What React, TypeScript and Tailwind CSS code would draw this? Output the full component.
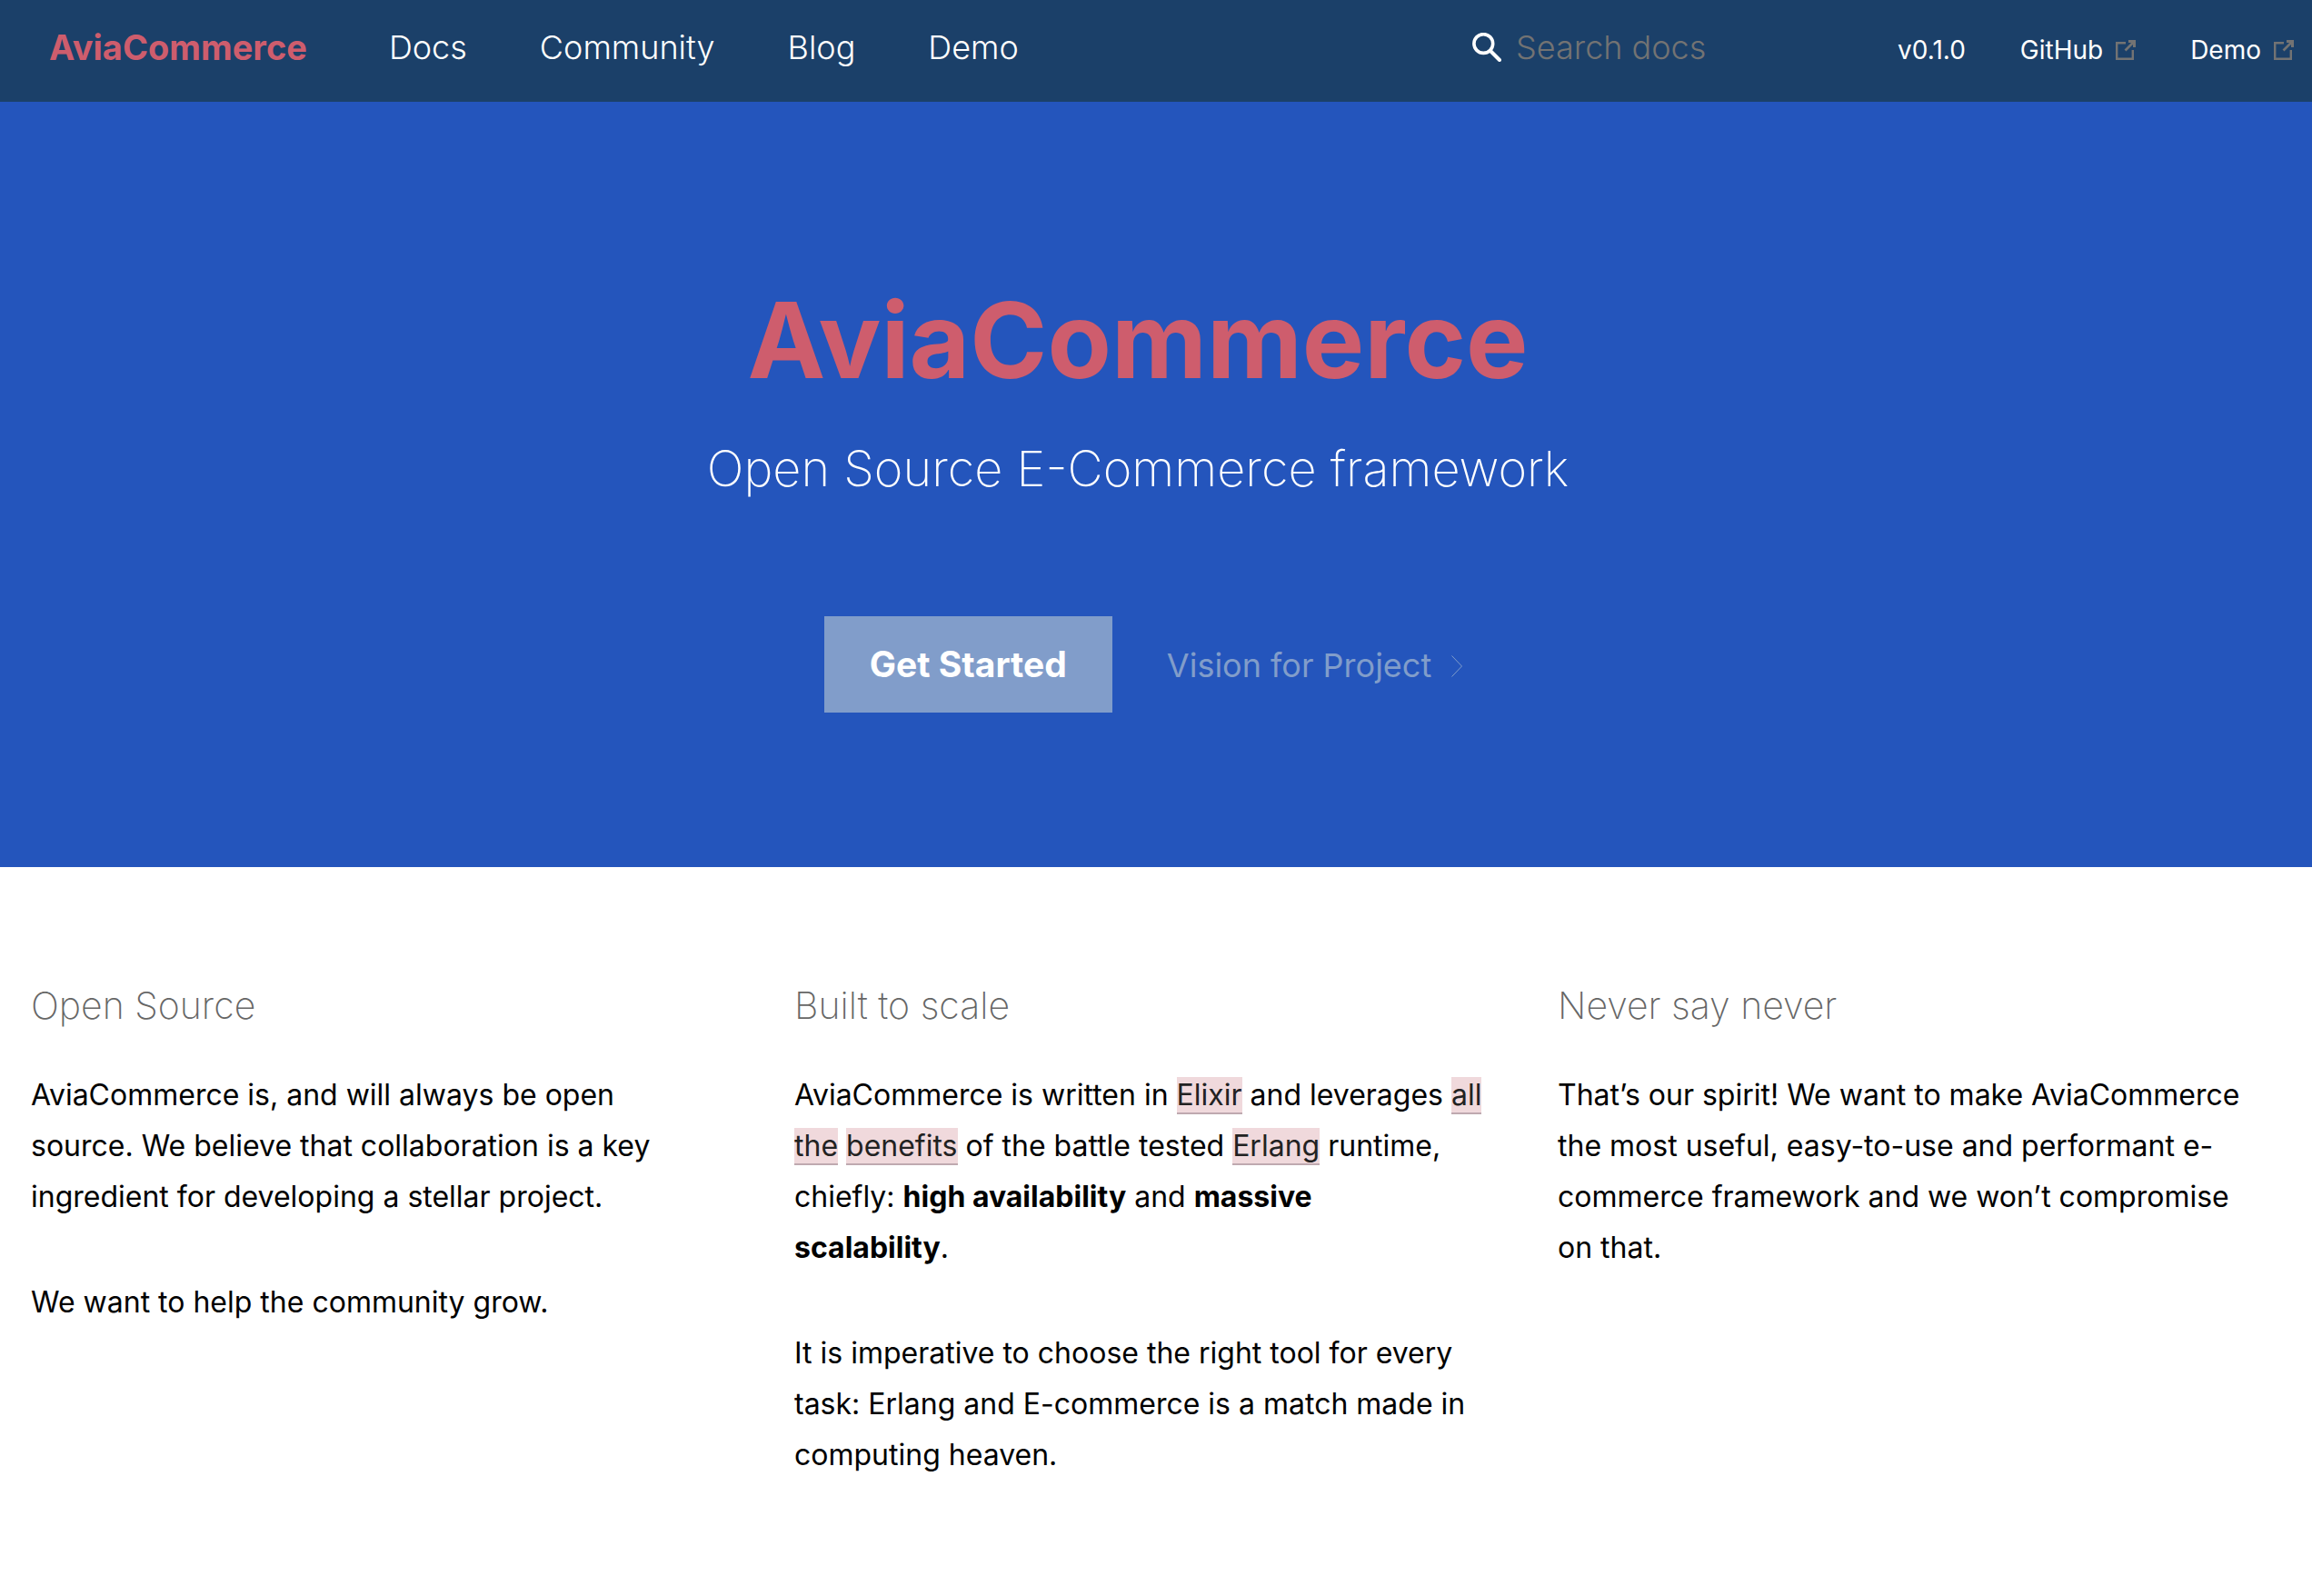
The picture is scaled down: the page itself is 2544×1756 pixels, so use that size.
import { ReactNode } from "react";

interface NavLinkProps {
  href: string;
  children: ReactNode;
}

const mainLinks = ["Docs", "Community", "Blog", "Demo"];

const SearchIcon = () => (
  <svg className="size-8 shrink-0" viewBox="0 0 32 32" fill="none" stroke="#fff" aria-hidden="true">
    <circle cx="12.3" cy="12" r="10.4" strokeWidth="3.6" />
    <path d="M20 20 30 30" strokeWidth="4" strokeLinecap="round" />
  </svg>
);

const ExternalIcon = () => (
  <svg className="size-[22px] shrink-0" viewBox="0 0 22 22" fill="none" stroke="#737373" strokeWidth="2.4" aria-hidden="true">
    <path d="M11 3.2H1.200v17.600h17.600V11" />
    <path d="M10.500 11.500 19 3" strokeWidth="2.600" />
    <path d="M14 1.500h6.500v6.500" strokeWidth="3" />
  </svg>
);

const ChevronIcon = () => (
  <svg className="w-3 h-6 shrink-0" viewBox="0 0 12 24" fill="none" stroke="currentColor" aria-hidden="true">
    <path d="M.5.5 11.5 12 .5 23.5" />
  </svg>
);

const ExternalLink = ({ href, children }: NavLinkProps) => (
  <a href={href} className="flex items-center gap-3.5">
    {children}
    <ExternalIcon />
  </a>
);

const Mark = ({ href, children }: NavLinkProps) => (
  <a href={href} className="bg-[#f0d9dc] text-[#222] border-b-2 border-[#bfa9b0]">
    {children}
  </a>
);

const Feature = ({ title, children }: { title: string; children: ReactNode }) => (
  <article>
    <h2 className="text-[41px] leading-[60px] font-extralight text-[#666]">{title}</h2>
    <div className="mt-[41px] text-[32px] leading-[56px] text-black">{children}</div>
  </article>
);

export default function App() {
  return (
    <div className="min-h-screen bg-white font-['Inter',sans-serif]">
      {/* Header */}
      <header className="flex items-center h-28 pl-[54px] pr-5 pb-2 bg-[#1b4069] text-white">
        <a href="#home" className="text-[38px] font-bold text-[#ce5d6d]">
          AviaCommerce
        </a>
        <nav className="flex gap-20 ml-[90px] text-4xl font-light">
          {mainLinks.map((link) => (
            <a key={link} href={`#${link.toLowerCase()}`}>
              {link}
            </a>
          ))}
        </nav>
        <label className="flex items-center gap-4 ml-auto">
          <SearchIcon />
          <input
            type="search"
            aria-label="Search docs"
            placeholder="Search docs"
            className="w-[360px] text-4xl font-light placeholder:text-[#737373] outline-none"
          />
        </label>
        <nav className="flex items-center gap-[60px] ml-[60px] pt-1.5 text-[28px]">
          <a href="#version">v0.1.0</a>
          <ExternalLink href="#github">GitHub</ExternalLink>
          <ExternalLink href="#demo">Demo</ExternalLink>
        </nav>
      </header>

      {/* Hero */}
      <section className="flex flex-col items-center pt-48 pb-[170px] pr-10 bg-[#2455bc]">
        <h1 className="text-[115px] leading-[142px] font-bold text-[#ce5d6d]">AviaCommerce</h1>
        <p className="mt-[30px] text-[54px] leading-[80px] font-extralight text-white">
          Open Source E-Commerce framework
        </p>
        <div className="flex items-baseline gap-[60px] mt-[122px] pl-3">
          <a href="#start" className="px-[50px] py-7 text-[39px] leading-[50px] font-bold bg-[#819dca] text-white">
            Get Started
          </a>
          <a href="#vision" className="flex items-baseline gap-[22px] text-4xl text-[#819dca]">
            Vision for Project
            <ChevronIcon />
          </a>
        </div>
      </section>

      {/* Features */}
      <section className="grid grid-cols-3 gap-20 pl-[34px] pr-[70px] pt-[122px]">
        <Feature title="Open Source">
          <p>
            AviaCommerce is, and will always be open source. We believe that collaboration is a key ingredient for
            developing a stellar project.
          </p>
          <p className="mt-15">We want to help the community grow.</p>
        </Feature>
        <Feature title="Built to scale">
          <p>
            AviaCommerce is written in <Mark href="#elixir">Elixir</Mark> and leverages <Mark href="#all">all</Mark>{" "}
            <Mark href="#the">the</Mark> <Mark href="#benefits">benefits</Mark> of the battle tested{" "}
            <Mark href="#erlang">Erlang</Mark> runtime, chiefly: <strong>high availability</strong> and{" "}
            <strong>
              massive
              <br />
              scalability
            </strong>
            .
          </p>
          <p className="mt-15">
            It is imperative to choose the right tool for every task: Erlang and E-commerce is a match made in
            computing heaven.
          </p>
        </Feature>
        <Feature title="Never say never">
          <p>
            That’s our spirit! We want to make AviaCommerce the most useful, easy-to-use and performant e-
            <wbr />
            commerce framework and we won’t compromise on that.
          </p>
        </Feature>
      </section>
    </div>
  );
}
